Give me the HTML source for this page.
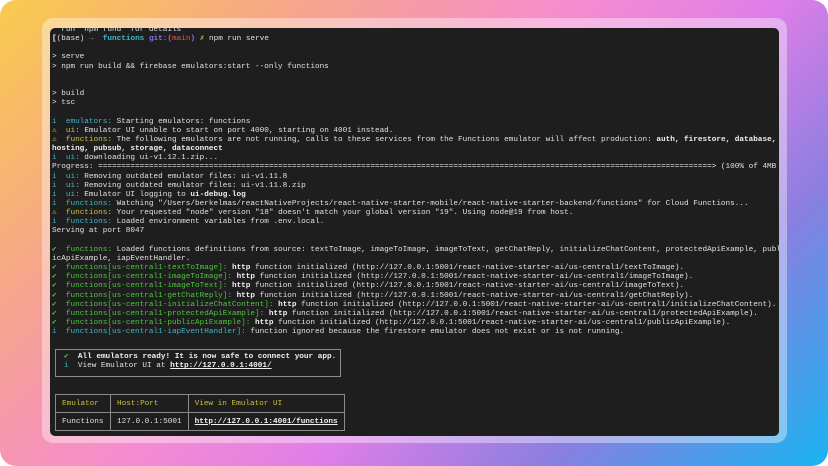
<!DOCTYPE html>
<html><head><meta charset="utf-8"><style>
html,body{margin:0;padding:0;background:#fff;}
.card{position:absolute;left:0;top:0;width:828px;height:466px;border-radius:16px;overflow:hidden;
background:linear-gradient(135deg,#f8cb4c 0%,#f7a38f 25%,#f58cd0 45%,#e07ee8 60%,#8a7fe0 78%,#18b4f2 100%);}
.frame{position:absolute;left:42px;top:18px;width:745px;height:425px;border-radius:11px;background:rgba(255,255,255,0.38);}
.term{position:absolute;left:50px;top:28px;width:729px;height:408px;border-radius:5px;background:#1e1e1e;overflow:hidden;}
pre{position:absolute;left:2px;top:-2px;margin:0;font-family:"Liberation Mono","DejaVu Sans Mono",monospace;font-size:7.7px;line-height:9.15px;color:#e0e0e0;white-space:pre;}
.c{color:#3bb8c8}.y{color:#c9c23c}.g{color:#4cc63e}.b{font-weight:bold;color:#f0f0f0}.p{color:#8b6fe0;font-weight:bold}.r{color:#e05a4a}
.box{position:absolute;left:5px;top:321px;width:284px;height:26px;border:1px solid #8a8a8a;}
.box pre{left:8px;top:3px;}
table{position:absolute;left:5px;top:366px;border-collapse:collapse;font-family:"Liberation Mono","DejaVu Sans Mono",monospace;font-size:7.7px;color:#e0e0e0;}
td{border:1px solid #8a8a8a;height:17px;padding:0 6px;white-space:nowrap;}
u{text-decoration:underline}
</style></head><body>
<div class="card">
<div class="frame"></div>
<div class="term">
<pre>  run `npm fund` for details
<span class="b">[</span>(base) <span class="g">→</span>  <span class="c" style="font-weight:bold">functions</span> <span class="p">git:(</span><span class="r">main</span><span class="p">)</span> <span class="y">✗</span> npm run serve

&gt; serve
&gt; npm run build &amp;&amp; firebase emulators:start --only functions


&gt; build
&gt; tsc

<span class="c">i  emulators:</span> Starting emulators: functions
<span class="y">⚠  ui:</span> Emulator UI unable to start on port 4000, starting on 4001 instead.
<span class="y">⚠  functions:</span> The following emulators are not running, calls to these services from the Functions emulator will affect production: <span class="b">auth, firestore, database,</span>
<span class="b">hosting, pubsub, storage, dataconnect</span>
<span class="c">i  ui:</span> downloading ui-v1.12.1.zip...
Progress: =====================================================================================================================================&gt; (100% of 4MB
<span class="c">i  ui:</span> Removing outdated emulator files: ui-v1.11.8
<span class="c">i  ui:</span> Removing outdated emulator files: ui-v1.11.8.zip
<span class="c">i  ui:</span> Emulator UI logging to <span class="b">ui-debug.log</span>
<span class="c">i  functions:</span> Watching "/Users/berkelmas/reactNativeProjects/react-native-starter-mobile/react-native-starter-backend/functions" for Cloud Functions...
<span class="y">⚠  functions:</span> Your requested "node" version "18" doesn't match your global version "19". Using node@19 from host.
<span class="c">i  functions:</span> Loaded environment variables from .env.local.
Serving at port 8047

<span class="g">✔  functions:</span> Loaded functions definitions from source: textToImage, imageToImage, imageToText, getChatReply, initializeChatContent, protectedApiExample, publ
icApiExample, iapEventHandler.
<span class="g">✔  functions[us-central1-textToImage]:</span> <span class="b">http</span> function initialized (http://127.0.0.1:5001/react-native-starter-ai/us-central1/textToImage).
<span class="g">✔  functions[us-central1-imageToImage]:</span> <span class="b">http</span> function initialized (http://127.0.0.1:5001/react-native-starter-ai/us-central1/imageToImage).
<span class="g">✔  functions[us-central1-imageToText]:</span> <span class="b">http</span> function initialized (http://127.0.0.1:5001/react-native-starter-ai/us-central1/imageToText).
<span class="g">✔  functions[us-central1-getChatReply]:</span> <span class="b">http</span> function initialized (http://127.0.0.1:5001/react-native-starter-ai/us-central1/getChatReply).
<span class="g">✔  functions[us-central1-initializeChatContent]:</span> <span class="b">http</span> function initialized (http://127.0.0.1:5001/react-native-starter-ai/us-central1/initializeChatContent).
<span class="g">✔  functions[us-central1-protectedApiExample]:</span> <span class="b">http</span> function initialized (http://127.0.0.1:5001/react-native-starter-ai/us-central1/protectedApiExample).
<span class="g">✔  functions[us-central1-publicApiExample]:</span> <span class="b">http</span> function initialized (http://127.0.0.1:5001/react-native-starter-ai/us-central1/publicApiExample).
<span class="c">i  functions[us-central1-iapEventHandler]:</span> function ignored because the firestore emulator does not exist or is not running.</pre>
<div class="box"><pre><span class="g">✔</span>  <span class="b">All emulators ready! It is now safe to connect your app.</span>
<span class="c">i</span>  View Emulator UI at <span class="b"><u>http://127.0.0.1:4001/</u></span></pre></div>
<table>
<tr><td class="y" style="width:42px">Emulator</td><td class="y" style="width:64px">Host:Port</td><td class="y" style="width:132px">View in Emulator UI</td></tr>
<tr><td>Functions</td><td>127.0.0.1:5001</td><td class="b"><u>http://127.0.0.1:4001/functions</u></td></tr>
</table>
</div>
</div>
</body></html>
